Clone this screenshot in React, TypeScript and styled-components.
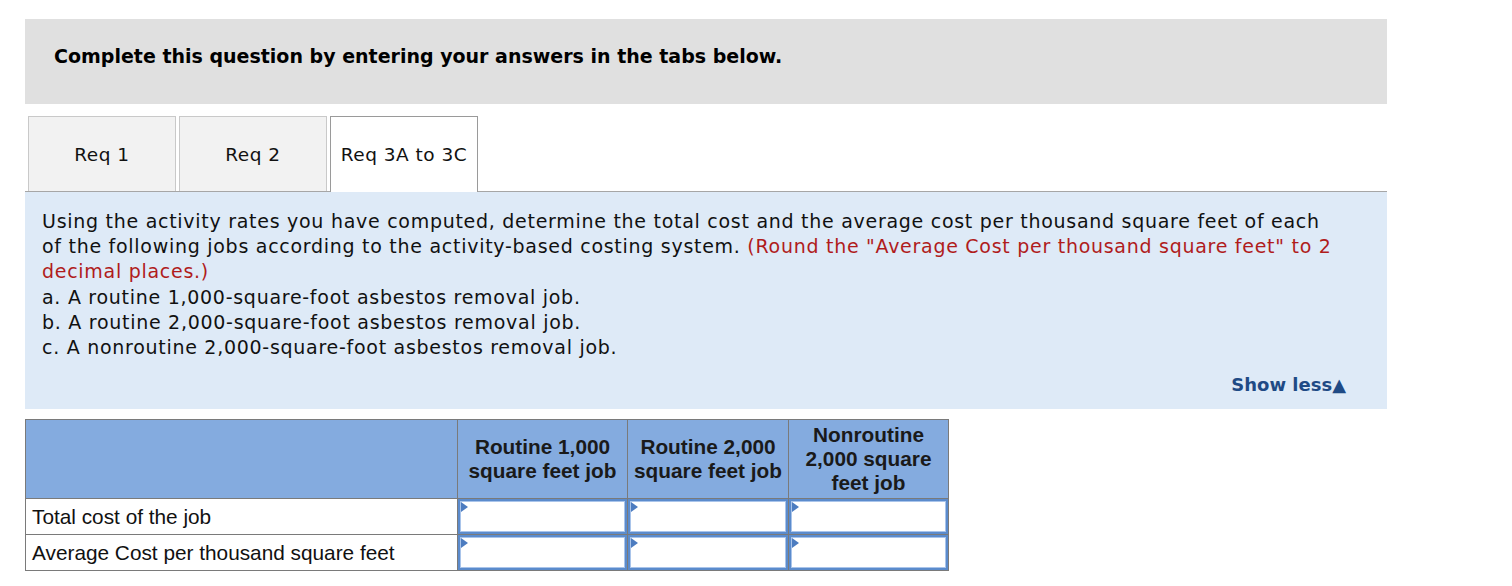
import styled, { createGlobalStyle } from 'styled-components';

const GlobalStyle = createGlobalStyle`
  body {
    margin: 0;
    background: #ffffff;
    font-family: 'DejaVu Sans', Verdana, sans-serif;
    color: #111;
  }
`;

const Page = styled.div`
  width: 1362px;
  margin: 19px 0 0 25px;
`;

const Banner = styled.div`
  height: 85px;
  box-sizing: border-box;
  padding: 26px 29px 0;
  background: #e0e0e0;
  font-size: 19px;
  font-weight: bold;
  color: #000;
`;

const TabRow = styled.div`
  display: flex;
  gap: 3px;
  margin-top: 12px;
  padding-left: 3px;
  border-bottom: 1px solid #a6a6a6;
`;

const Tab = styled.div<{ $active?: boolean }>`
  width: 148px;
  box-sizing: border-box;
  display: flex;
  align-items: center;
  justify-content: center;
  font-size: 18.5px;
  letter-spacing: 0.5px;
  color: #111;
  background: ${p => (p.$active ? '#ffffff' : '#f2f2f2')};
  border: 1px solid ${p => (p.$active ? '#9a9a9a' : '#c9c9c9')};
  border-bottom: none;
  margin-bottom: ${p => (p.$active ? '-1px' : '0')};
  height: ${p => (p.$active ? '76px' : '75px')};
`;

const Prompt = styled.div`
  background: #deeaf7;
  padding: 17px 41px 12px 17px;
  font-size: 19px;
  letter-spacing: 0.72px;
  line-height: 25.2px;
  color: #111;
`;

const Hint = styled.span`
  color: #b01c1c;
`;

const ShowLess = styled.div`
  margin-top: 12px;
  text-align: right;
  font-size: 18px;
  letter-spacing: 0;
  font-weight: bold;
  color: #1f4a85;
`;

const Table = styled.table`
  width: 923px;
  margin-top: 10px;
  border-collapse: collapse;
  table-layout: fixed;
  font-family: 'Liberation Sans', Arial, sans-serif;
  font-size: 20.8px;
  color: #111;
`;

const HeadCell = styled.th<{ $w: number }>`
  width: ${p => p.$w}px;
  height: 78px;
  padding: 0;
  background: #84abdf;
  border: 1px solid #7a7a7a;
  font-weight: bold;
  line-height: 24px;
  text-align: center;
  color: #1a1a1a;
  white-space: nowrap;
`;

const LabelCell = styled.td`
  height: 35px;
  padding: 0 6px;
  border: 1px solid #7a7a7a;
  text-align: left;
`;

const InputCell = styled.td`
  height: 35px;
  padding: 0;
  border: 1px solid #7a7a7a;
`;

const InputBox = styled.div`
  position: relative;
  height: 35px;
  box-sizing: border-box;
  border: 2px solid #5b8bcc;
  box-shadow: inset 0 0 0 1px #a9c4ea;
  background: #fff;

  &::before {
    content: '';
    position: absolute;
    top: 1px;
    left: 1px;
    border-top: 5px solid transparent;
    border-bottom: 5px solid transparent;
    border-left: 7px solid #4c7cc0;
  }
`;

const columns = [
  ['Routine 1,000', 'square feet job'],
  ['Routine 2,000', 'square feet job'],
  ['Nonroutine', '2,000 square', 'feet job'],
];
const widths = [169, 160, 159];
const rows = ['Total cost of the job', 'Average Cost per thousand square feet'];

export default function App() {
  return (
    <Page>
      <GlobalStyle />
      <Banner>Complete this question by entering your answers in the tabs below.</Banner>
      <TabRow>
        <Tab>Req 1</Tab>
        <Tab>Req 2</Tab>
        <Tab $active>Req 3A to 3C</Tab>
      </TabRow>
      <Prompt>
        Using the activity rates you have computed, determine the total cost and the average cost per thousand
        square feet of each of the following jobs according to the activity-based costing system.{' '}
        <Hint>(Round the "Average Cost per thousand square feet" to 2 decimal places.)</Hint>
        <br />
        a. A routine 1,000-square-foot asbestos removal job.
        <br />
        b. A routine 2,000-square-foot asbestos removal job.
        <br />
        c. A nonroutine 2,000-square-foot asbestos removal job.
        <ShowLess>Show less▲</ShowLess>
      </Prompt>
      <Table>
        <thead>
          <tr>
            <HeadCell $w={431} />
            {columns.map((lines, i) => (
              <HeadCell key={lines.join(' ')} $w={widths[i]}>
                {lines.map((l, j) => (
                  <span key={l}>
                    {j > 0 && <br />}
                    {l}
                  </span>
                ))}
              </HeadCell>
            ))}
          </tr>
        </thead>
        <tbody>
          {rows.map(r => (
            <tr key={r}>
              <LabelCell>{r}</LabelCell>
              {columns.map(c => (
                <InputCell key={c.join(' ')}>
                  <InputBox />
                </InputCell>
              ))}
            </tr>
          ))}
        </tbody>
      </Table>
    </Page>
  );
}
